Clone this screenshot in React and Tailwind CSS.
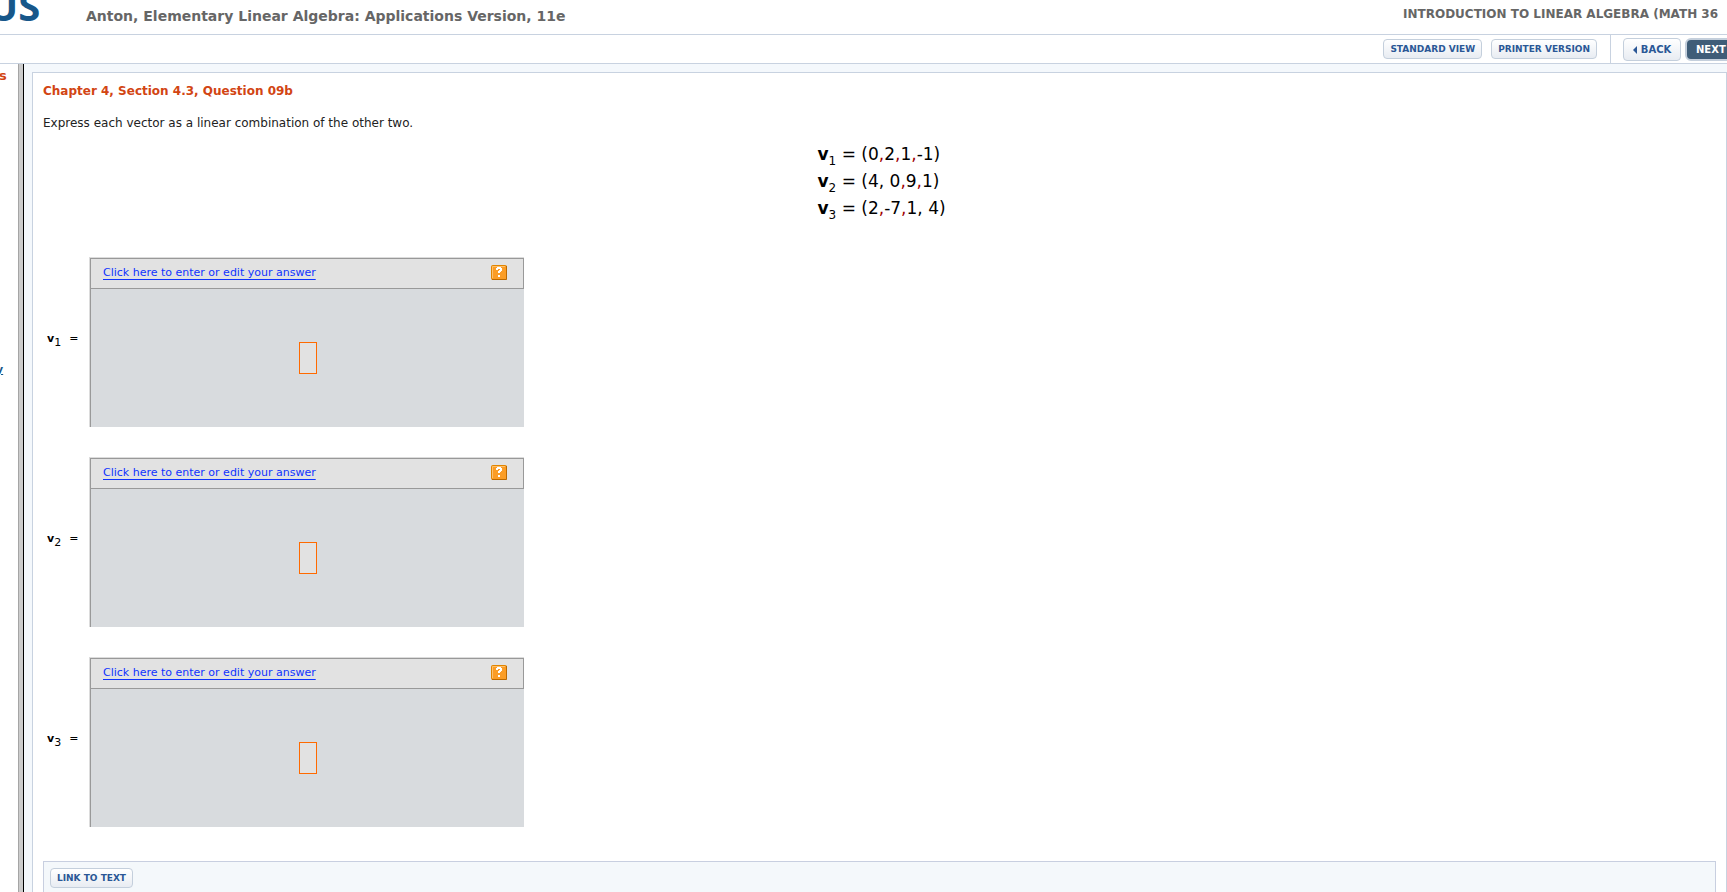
import React from 'react';

const vectors = [
  { id: 1, parts: ['0', ',', '2', ',', '1', ',', '-1'] },
  { id: 2, parts: ['4, 0', ',', '9', ',', '1'] },
  { id: 3, parts: ['2', ',', '-7', ',', '1, 4'] },
];

const smallButton =
  'h-5 px-1.5 rounded border border-[#c4cfdc] bg-linear-to-b from-white to-[#e8ecf2] text-[9px] leading-[18px] font-bold text-[#2a5796] whitespace-nowrap';

const HelpIcon = () => (
  <svg width="16" height="15" viewBox="0 0 16 15" aria-hidden="true">
    <rect x="0.5" y="0.5" width="15" height="14" rx="1" fill="#fb9d26" stroke="#e08500" />
    <path d="M15.5 1v13.5H1" fill="none" stroke="#bd6a00" />
    <path d="M1.5 13V1.5H14" fill="none" stroke="#ffc06a" />
    <path d="M5 3h1V2h4v1h1v3h-1v1H9v1H7V6h1V5h1V4H7v1H5zM7 10h2v2H7z" fill="#fff" />
  </svg>
);

const Header = () => (
  <header>
    <div className="flex h-[35px] items-start justify-between overflow-hidden border-b border-[#c8d2e0]">
      <div className="flex items-start">
        <span className="-mt-3.5 -ml-3 w-[98px] font-['Open_Sans',sans-serif] text-[40px] leading-10 font-bold text-[#17578a]">
          US
        </span>
        <h1 className="pt-1.5 text-sm leading-5 font-bold whitespace-nowrap text-[#666]">
          Anton, Elementary Linear Algebra: Applications Version, 11e
        </h1>
      </div>
      <p className="w-[324px] overflow-hidden pt-1 text-xs leading-5 font-bold whitespace-nowrap text-[#666]">
        INTRODUCTION TO LINEAR ALGEBRA (MATH 36
      </p>
    </div>
    <div className="flex h-[29px] justify-end overflow-hidden border-b border-[#c8d2e0]">
      <div className="flex items-start gap-[9px] pt-1 pr-[13px]">
        <button type="button" className={smallButton}>STANDARD VIEW</button>
        <button type="button" className={smallButton}>PRINTER VERSION</button>
      </div>
      <div className="flex w-[117px] items-start gap-1 overflow-hidden border-l border-[#c8d2e0] pt-[3px] pl-3">
        <button
          type="button"
          className="flex h-[23px] w-[58px] shrink-0 items-center justify-center gap-1 rounded border border-[#c4cfdc] bg-linear-to-b from-white to-[#e8ecf2] text-[10px] leading-5 font-bold text-[#2a5796]"
        >
          <svg width="4" height="8" viewBox="0 0 4 8" aria-hidden="true">
            <path d="M4 0v8L0 4z" fill="#2a5796" />
          </svg>
          BACK
        </button>
        <button
          type="button"
          className="h-[23px] w-16 shrink-0 rounded-md border-2 border-[#c4cfdc] bg-[#3f5d78] pl-[9px] text-left text-[10px] leading-5 font-bold text-white"
        >
          NEXT
        </button>
      </div>
    </div>
  </header>
);

const VectorList = () => (
  <div className="flex justify-center pt-2">
    <div className="w-[124px] text-[17px] leading-[27px] whitespace-nowrap text-black">
      {vectors.map(({ id, parts }) => (
        <p key={id} className="h-[27px]">
          <b>v</b>
          <sub className="static align-[-5px] text-xs leading-none">{id}</sub>
          {' = ('}
          {parts.map((part, i) => (
            <span key={i} className={part === ',' ? 'text-[#a00000]' : ''}>{part}</span>
          ))}
          )
        </p>
      ))}
    </div>
  </div>
);

const AnswerRow = ({ id }) => (
  <div className="flex items-center">
    <div className="w-[46px] shrink-0 pb-1 pl-1 text-[11px] whitespace-nowrap text-black">
      <b>v</b>
      <sub className="static align-[-4px] text-[11px] leading-none">{id}</sub>
      <span className="pl-2">=</span>
    </div>
    <div className="flex h-[170px] w-[435px] flex-col border-t border-l border-[#dcdcdc] bg-[#d8dbde]">
      <div className="flex h-[31px] shrink-0 items-center justify-between border border-[#999] bg-[#e2e2e2] pr-4 pb-0.5 pl-3">
        <a
          href="#editor"
          className="text-[11px] leading-4 text-[#0f33ff] underline underline-offset-3 [text-decoration-skip-ink:none]"
        >
          Click here to enter or edit your answer
        </a>
        <button type="button" aria-label="Help"><HelpIcon /></button>
      </div>
      <div className="flex flex-1 items-center justify-center border-l border-[#999]">
        <input
          type="text"
          aria-label={`Answer v${id}`}
          className="h-8 w-[18px] border border-[#ff6a00] bg-[#e2e2e2]"
        />
      </div>
    </div>
  </div>
);

const App = () => (
  <div className="flex h-screen flex-col overflow-hidden bg-white font-['DejaVu_Sans',Verdana,sans-serif] text-xs text-[#222]">
    <Header />
    <div className="flex min-h-0 flex-1">
      <aside className="flex w-[18px] shrink-0 flex-col items-start overflow-hidden">
        <span className="-ml-px pt-1 text-[13px] leading-4 font-bold text-[#d24513]">s</span>
        <a href="#study" className="mt-[278px] -ml-1 text-[11px] leading-4 font-bold text-[#17578a] underline">y</a>
      </aside>
      <div className="w-1.5 shrink-0 border-r border-l border-r-black border-l-[#a5a5a5] bg-[#ccc]" />
      <div className="flex-1 bg-[#f4f8fc] pt-2 pl-2">
        <main className="h-full border border-b-0 border-[#c8d2e0] bg-white px-2.5 pt-2">
          <h2 className="text-xs leading-5 font-bold text-[#d24513]">Chapter 4, Section 4.3, Question 09b</h2>
          <p className="pt-3 leading-5">Express each vector as a linear combination of the other two.</p>
          <VectorList />
          <div className="flex flex-col gap-[30px] pt-[35px]">
            {vectors.map(({ id }) => <AnswerRow key={id} id={id} />)}
          </div>
          <div className="mt-[34px] flex h-14 items-start border border-[#c8cfe0] bg-[#f4f8fb] px-1.5 pt-1.5">
            <button type="button" className={smallButton}>LINK TO TEXT</button>
          </div>
        </main>
      </div>
    </div>
  </div>
);

export default App;
